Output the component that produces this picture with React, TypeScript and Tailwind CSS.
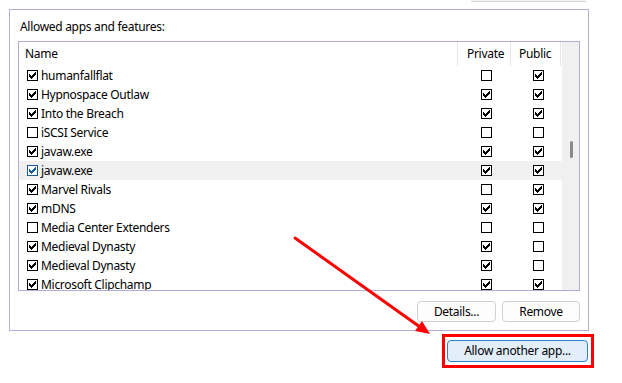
import React from 'react';

type Row = { name: string; on: boolean; priv: boolean; pub: boolean; selected?: boolean };

const rows: Row[] = [
  { name: 'humanfallflat', on: true, priv: false, pub: true },
  { name: 'Hypnospace Outlaw', on: true, priv: true, pub: true },
  { name: 'Into the Breach', on: true, priv: true, pub: true },
  { name: 'iSCSI Service', on: false, priv: false, pub: false },
  { name: 'javaw.exe', on: true, priv: true, pub: true },
  { name: 'javaw.exe', on: true, priv: true, pub: true, selected: true },
  { name: 'Marvel Rivals', on: true, priv: false, pub: true },
  { name: 'mDNS', on: true, priv: true, pub: true },
  { name: 'Media Center Extenders', on: false, priv: false, pub: false },
  { name: 'Medieval Dynasty', on: true, priv: true, pub: false },
  { name: 'Medieval Dynasty', on: true, priv: true, pub: false },
  { name: 'Microsoft Clipchamp', on: true, priv: true, pub: true },
];

// classic 7x7 tick, drawn pixel by pixel
const tick = [
  '......X',
  '.....XX',
  'X...XXX',
  'XX.XXX.',
  'XXXXX..',
  '.XXX...',
  '..X....',
];

const Check = ({ on, focus }: { on: boolean; focus?: boolean }) => {
  const c = focus ? '#1a5a96' : '#000';
  return (
    <svg width="11" height="11" viewBox="0 0 11 11" className="shrink-0" shapeRendering="crispEdges">
      <rect x="0.5" y="0.5" width="10" height="10" fill="#fff" stroke={c} />
      {on &&
        tick.map((line, y) =>
          line.split('').map((ch, x) =>
            ch === 'X' ? <rect key={`${x}-${y}`} x={2 + x} y={2 + y} width="1" height="1" fill={c} /> : null
          )
        )}
    </svg>
  );
};

export default function App() {
  return (
    <div className="relative w-[622px] h-[383px] bg-white text-[12px] tracking-[-0.3px] text-black overflow-hidden" style={{ fontFamily: '"Noto Sans", "Segoe UI", sans-serif' }}>
      <div className="h-[9px] flex justify-end pr-[36px]">
        <div className="w-[115px] h-[2px] border-b border-[#d6d6d6] bg-[#f5f5f5]"></div>
      </div>

      <div className="ml-[9px] w-[580px] h-[322px] border border-[#b1b1da] pl-[8px] flex flex-col">
        <div className="h-[31px] flex items-center pl-[2px] pt-[2px]">Allowed apps and features:</div>

        <div className="w-[562px] h-[250px] border border-[#aeaed8] flex overflow-hidden">
          <div className="w-[543px] flex flex-col">
            <div className="h-[24px] shrink-0 flex">
              <div className="w-[439px] flex items-center pl-[6px] border-r border-[#e5e5e5]">Name</div>
              <div className="w-[53px] flex items-center pl-[9px] border-r border-[#e5e5e5]">Private</div>
              <div className="w-[50px] flex items-center pl-[8px] border-r border-[#e5e5e5]">Public</div>
            </div>
            {rows.map((r, i) => (
              <div key={i} className={`h-[19px] shrink-0 flex items-center ${r.selected ? 'bg-[#f0f0f0]' : ''}`}>
                <div className="w-[440px] flex items-center gap-[3px] pl-[8px] whitespace-nowrap">
                  <Check on={r.on} focus={r.selected} />
                  <span>{r.name}</span>
                </div>
                <div className="w-[53px] flex pl-[22px]">
                  <Check on={r.priv} />
                </div>
                <div className="w-[50px] flex pl-[21px]">
                  <Check on={r.pub} />
                </div>
              </div>
            ))}
          </div>
          <div className="flex-1 bg-[#f0f0f0] flex justify-center pt-[99px]">
            <div className="w-[3px] h-[17px] bg-[#8a8a8a] rounded-full ml-[1px]"></div>
          </div>
        </div>

        <div className="flex justify-end gap-[6px] w-[562px] pt-[10px]">
          <button className="w-[79px] h-[21px] border border-[#d0d0d0] rounded-[4px] bg-[#fdfdfd] flex items-center justify-center">Details...</button>
          <button className="w-[78px] h-[21px] border border-[#d0d0d0] rounded-[4px] bg-[#fdfdfd] flex items-center justify-center">Remove</button>
        </div>
      </div>

      <div className="flex justify-end pr-[34px] pt-[9px]">
        <button className="w-[141px] h-[22px] border border-[#2d7fd0] rounded-[4px] bg-[#e2eefa] flex items-center justify-center">Allow another app...</button>
      </div>

      <div className="absolute left-[442px] top-[334px] w-[152px] h-[34px] border-[3px] border-[#ff0000]"></div>

      <svg className="absolute left-0 top-0 pointer-events-none" width="622" height="383">
        <line x1="295" y1="238" x2="420" y2="327" stroke="#ff0000" strokeWidth="3" strokeLinecap="round" />
        <polygon points="430,334 415,331 422,321" fill="#ff0000" />
      </svg>
    </div>
  );
}
